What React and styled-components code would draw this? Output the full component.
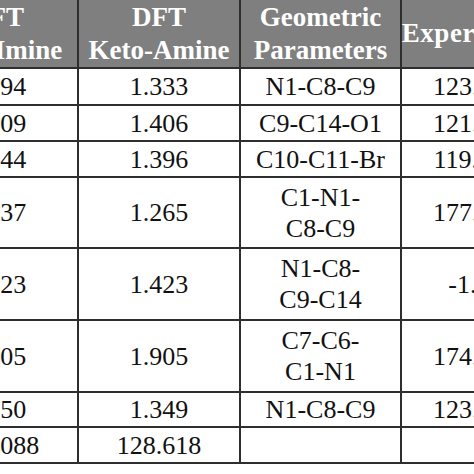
import React from "react";
import styled, { createGlobalStyle } from "styled-components";

const Global = createGlobalStyle`
  html, body { margin: 0; padding: 0; background: #ffffff; }
  body { overflow: hidden; }
`;

const Viewport = styled.div`
  width: 474px;
  height: 474px;
  overflow: hidden;
  background: #ffffff;
`;

const Table = styled.div`
  display: grid;
  grid-template-columns: 160px 160px 159px 164px;
  grid-template-rows: 67px 35px 34px 34px 69px 70px 70px 33px 34px;
  gap: 2px;
  padding: 2px;
  margin: -2px 0 0 -85px;
  width: max-content;
  background: #2e2e2e;
`;

const HeadCell = styled.div`
  background: #7f7f7f;
  color: #ffffff;
  font-family: "Liberation Serif", "Times New Roman", serif;
  font-weight: 700;
  font-size: 27px;
  line-height: 33px;
  display: flex;
  flex-direction: column;
  align-items: center;
  justify-content: center;
  text-align: center;
  white-space: nowrap;
  letter-spacing: ${(p) => (p.$wide ? "0.6px" : "0")};
`;

const Cell = styled.div`
  background: #ffffff;
  color: #111111;
  font-family: "Liberation Serif", "Times New Roman", serif;
  font-size: 26px;
  line-height: 31px;
  display: flex;
  flex-direction: column;
  align-items: center;
  justify-content: center;
  text-align: center;
  white-space: nowrap;
`;

const Line = styled.span`
  display: block;
`;

const headers = [
  ["DFT", "Enol-Imine"],
  ["DFT", "Keto-Amine"],
  ["Geometric", "Parameters"],
  ["Experimental"],
];

const rows = [
  ["1.294", "1.333", ["N1-C8-C9"], "123.53(4)"],
  ["1.309", "1.406", ["C9-C14-O1"], "121.31(4)"],
  ["1.344", "1.396", ["C10-C11-Br"], "119.24(3)"],
  ["1.237", "1.265", ["C1-N1-", "C8-C9"], "177.92(4)"],
  ["1.323", "1.423", ["N1-C8-", "C9-C14"], "-1.6(6)"],
  ["1.905", "1.905", ["C7-C6-", "C1-N1"], "174.31(4)"],
  ["1.350", "1.349", ["N1-C8-C9"], "123.53(4)"],
  ["128.088", "128.618", [], ""],
];

export default function App() {
  return (
    <Viewport>
      <Global />
      <Table>
        {headers.map((h, i) => (
          <HeadCell key={"h" + i} $wide={i === 3}>
            {h.map((t, j) => (
              <Line key={j}>{t}</Line>
            ))}
          </HeadCell>
        ))}
        {rows.map((r, i) => (
          <React.Fragment key={"r" + i}>
            <Cell>{r[0]}</Cell>
            <Cell>{r[1]}</Cell>
            <Cell>
              {r[2].map((t, j) => (
                <Line key={j}>{t}</Line>
              ))}
            </Cell>
            <Cell>{r[3]}</Cell>
          </React.Fragment>
        ))}
      </Table>
    </Viewport>
  );
}
